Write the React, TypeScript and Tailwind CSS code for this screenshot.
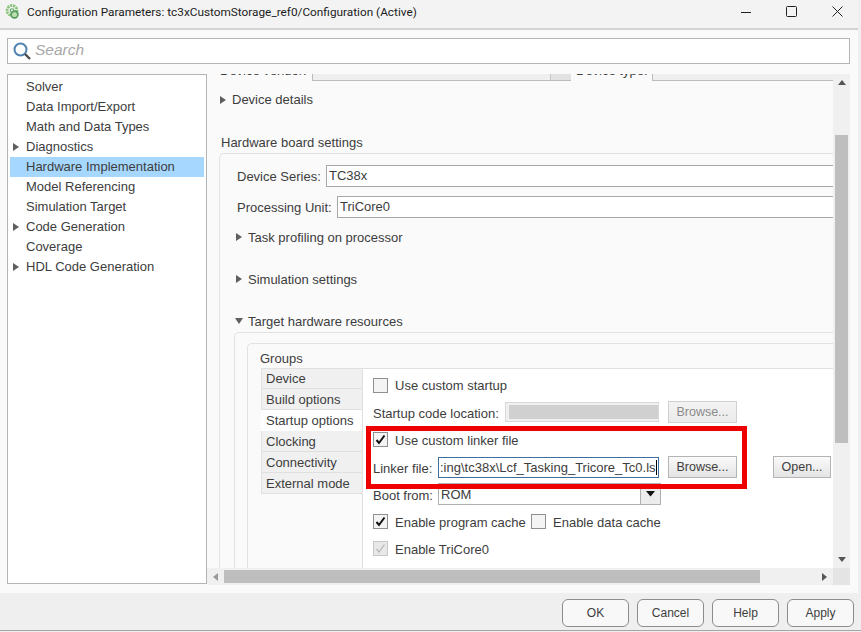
import React from "react";

const T = ({ open, className = "" }: { open?: boolean; className?: string }) => (
  <svg width="8" height="10" viewBox="0 0 8 10" className={"shrink-0 " + className}>
    {open ? <path d="M0 2h8L4 8z" fill="#5f5f5f" /> : <path d="M1 1l6 4-6 4z" fill="#5f5f5f" />}
  </svg>
);

const Check = ({ checked, disabled, className = "" }: { checked?: boolean; disabled?: boolean; className?: string }) => (
  <span className={"w-[15px] h-[15px] border flex items-center justify-center shrink-0 " + (disabled ? "border-[#c8c8c8] bg-[#e8e8e8] " : "border-[#8f8f8f] bg-[#f4f4f4] ") + className}>
    {checked && (
      <svg width="11" height="11" viewBox="0 0 11 11">
        <path d="M1.5 6l2.5 3L9.5 1.5" fill="none" stroke={disabled ? "#b5b5b5" : "#111"} strokeWidth={disabled ? 1.2 : 2} />
      </svg>
    )}
  </span>
);

const Btn = ({ children, disabled, className = "" }: { children: React.ReactNode; disabled?: boolean; className?: string }) => (
  <span className={"h-[22px] w-[69px] border flex items-center justify-center shrink-0 text-[12.5px] bg-gradient-to-b " + (disabled ? "border-[#d0d0d0] from-[#f3f3f3] to-[#ebebeb] text-[#8a8a8a] " : "border-[#b4b4b4] from-[#fafafa] to-[#e4e4e4] ") + className}>
    {children}
  </span>
);

const tree: [string, boolean, boolean][] = [
  ["Solver", false, false],
  ["Data Import/Export", false, false],
  ["Math and Data Types", false, false],
  ["Diagnostics", true, false],
  ["Hardware Implementation", false, true],
  ["Model Referencing", false, false],
  ["Simulation Target", false, false],
  ["Code Generation", true, false],
  ["Coverage", false, false],
  ["HDL Code Generation", true, false],
];

const tabs = ["Device", "Build options", "Startup options", "Clocking", "Connectivity", "External mode"];
const tabPad = ["", "pt-[2px]", "", "pt-[2px]", "pt-[2px]", "pt-[2px]"];

export default function App() {
  return (
    <div className="relative w-[861px] h-[632px] overflow-hidden bg-[#efefef] text-[13px] leading-[20px] text-[#3d3d3d] font-['Liberation_Sans',sans-serif]">
      {/* title bar */}
      <div className="h-[30px] bg-[#f3f3f3] border-b-2 border-[#d3d3d3] flex items-center mr-[3px] pb-[5px]">
        <svg width="15" height="16" viewBox="0 0 15 16" className="ml-[5px] shrink-0">
          <circle cx="7" cy="6.5" r="5" fill="none" stroke="#8cc27a" strokeWidth="2.8" strokeDasharray="2.2 .8" />
          <circle cx="9.5" cy="10.5" r="3.4" fill="#bcdcae" stroke="#4f9a58" strokeWidth="1.6" />
          <circle cx="7" cy="6.5" r="1.8" fill="none" stroke="#5da565" strokeWidth="1.1" />
        </svg>
        <span className="ml-[7px] text-[11.8px] text-[#1c1c1c] font-['Roboto',sans-serif] whitespace-nowrap">Configuration Parameters: tc3xCustomStorage_ref0/Configuration (Active)</span>
        <svg width="10" height="12" viewBox="0 0 10 12" className="ml-auto mr-[35px]"><path d="M0 6.5h10" stroke="#222" strokeWidth="1" /></svg>
        <svg width="12" height="12" viewBox="0 0 12 12" className="mr-[34px]"><rect x=".5" y=".5" width="10" height="10" rx="1" fill="none" stroke="#222" /></svg>
        <svg width="11" height="11" viewBox="0 0 11 11" className="mr-[15px]"><path d="M.5.5l10 10M10.5.5l-10 10" stroke="#222" /></svg>
      </div>

      {/* main */}
      <div className="h-[563px] bg-[#fafafa] mr-[3px] pl-[7px] pr-[8px] pt-[8px] flex flex-col">
        <div className="h-[26px] bg-white border border-[#b4b4b4] flex items-center pl-[4px] pb-[1px]">
          <svg width="20" height="20" viewBox="0 0 20 20" className="shrink-0">
            <circle cx="8.5" cy="8.5" r="6" fill="none" stroke="#4f81b0" strokeWidth="2" />
            <path d="M13 13l5 5" stroke="#4a4a4a" strokeWidth="2.4" />
          </svg>
          <span className="ml-[3px] pb-[2px] text-[15.5px] italic text-[#a8a8a8]">Search</span>
        </div>
        <div className="mt-[10px] flex h-[511px]">
          {/* tree */}
          <div className="w-[200px] h-[510px] bg-white border border-[#b4b4b4] pt-[2px] pl-[2px] pr-[2px] shrink-0">
            {tree.map(([t, arrow, sel]) => (
              <div key={t} className={"h-[20px] flex items-center " + (sel ? "bg-[#a6d8ff]" : "")}>
                <span className="w-[16px] shrink-0 flex justify-start pl-[2px]">{arrow && <T />}</span>
                <span className="whitespace-nowrap">{t}</span>
              </div>
            ))}
          </div>
          {/* right panel */}
          <div className="flex-1 min-w-0 flex flex-col">
            <div className="flex h-[494px]">
              <div className="w-[626px] overflow-hidden">
                {/* clipped top row */}
                <div className="h-[7px] overflow-hidden relative flex">
                  <div className="ml-[105px] w-[259px] h-[7px] bg-[#efefef] border-l border-b border-[#bcbcbc] flex shrink-0">
                    <span className="flex-1" />
                    <span className="w-[21px] bg-[#e2e2e2] border-l border-[#c8c8c8]" />
                  </div>
                  <div className="w-[81px] shrink-0" />
                  <div className="w-[181px] h-[7px] bg-[#efefef] border-l border-b border-[#bcbcbc] shrink-0" />
                  <span className="absolute left-[13px] -top-[13px] whitespace-nowrap">Device vendor:</span>
                  <span className="absolute left-[369px] -top-[13px] whitespace-nowrap">Device type:</span>
                  <span className="absolute left-[110px] -top-[14px] whitespace-nowrap text-[#8a8a8a]">Infineon</span>
                  <span className="absolute left-[450px] -top-[14px] whitespace-nowrap text-[#a08a70]">TriCore</span>
                </div>
                <div className="h-[18px] mt-[10px] ml-[12px] flex items-center gap-[5px] whitespace-nowrap">
                  <T /><span>Device details</span>
                </div>
                <div className="mt-[24px] ml-[14px] h-[20px] flex items-center whitespace-nowrap">Hardware board settings</div>
                {/* group 1 */}
                <div className="ml-[12px] h-[416px] border-l border-t border-[#e2e2e2] rounded-tl-[5px] pl-[17px] pt-[10px]">
                  <div className="flex items-center h-[23px] whitespace-nowrap">
                    <span className="w-[89px] shrink-0 pt-[2px]">Device Series:</span>
                    <span className="h-[22px] flex-1 bg-white border border-r-0 border-[#a8a8a8] pl-[2px] flex items-center pt-[1px]">TC38x</span>
                  </div>
                  <div className="flex items-center h-[23px] mt-[8px] whitespace-nowrap">
                    <span className="w-[100px] shrink-0 pt-[2px]">Processing Unit:</span>
                    <span className="h-[22px] flex-1 bg-white border border-r-0 border-[#a8a8a8] pl-[2px] flex items-center pt-[1px]">TriCore0</span>
                  </div>
                  <div className="mt-[9px] h-[20px] -ml-[2px] flex items-center gap-[5px] whitespace-nowrap"><T /><span className="pt-[2px]">Task profiling on processor</span></div>
                  <div className="mt-[22px] h-[20px] -ml-[2px] flex items-center gap-[5px] whitespace-nowrap"><T /><span className="pt-[2px]">Simulation settings</span></div>
                  <div className="mt-[22px] h-[20px] -ml-[2px] flex items-center gap-[5px] whitespace-nowrap"><T open /><span className="pt-[2px]">Target hardware resources</span></div>
                  {/* group 2 */}
                  <div className="mt-[1px] -ml-[3px] h-[240px] border-l border-t border-[#e2e2e2] rounded-tl-[5px] pl-[12px] pt-[10px]">
                    {/* group 3 */}
                    <div className="h-[230px] border-l border-t border-[#e2e2e2] rounded-tl-[5px] pl-[13px] pt-[4px]">
                      <div className="h-[20px] flex items-center -ml-[1px]"><span className="pt-[2px]">Groups</span></div>
                      <div className="flex">
                        <div className="w-[101px] shrink-0">
                          {tabs.map((t, i) => (
                            <div key={t} className={"h-[21px] flex items-center pl-[4px] border-l whitespace-nowrap border-[#e0e0e0] " + tabPad[i] + " " + (i === 2 ? "bg-white border-l-white" : "bg-[#f0f0f0] border-b") + (i === 0 ? " border-t" : "")}>{t}</div>
                          ))}
                        </div>
                        <div className="flex-1 min-w-0 h-[200px] bg-white border-l border-t border-[#e0e0e0] pl-[10px] pt-[9px] whitespace-nowrap">
                          <div className="h-[15px] flex items-center gap-[7px]"><Check /><span>Use custom startup</span></div>
                          <div className="h-[22px] mt-[8px] flex items-center">
                            <span className="w-[132px] shrink-0 pt-[4px]">Startup code location:</span>
                            <span className="h-[20px] w-[154px] border border-[#d8d8d8] bg-[#f0f0f0] py-[2px] pl-[3px] shrink-0"><span className="block h-full bg-[#d0d0d0]" /></span>
                            <Btn disabled className="ml-[9px]">Browse...</Btn>
                          </div>
                          <div className="h-[15px] mt-[9px] flex items-center gap-[7px]"><Check checked /><span className="pt-[2px]">Use custom linker file</span></div>
                          <div className="h-[22px] mt-[9px] flex items-center">
                            <span className="w-[65px] shrink-0 pt-[4px]">Linker file:</span>
                            <span className="h-[21px] w-[221px] border border-[#3f6f9f] bg-white shrink-0 flex items-center pl-[1px] overflow-hidden pt-[1px]">:ing\tc38x\Lcf_Tasking_Tricore_Tc0.ls<span className="w-px h-[15px] bg-black" /></span>
                            <Btn className="ml-[9px]">Browse...</Btn>
                            <Btn className="ml-[36px] !w-[58px]">Open...</Btn>
                          </div>
                          <div className="h-[22px] mt-[5px] flex items-center">
                            <span className="w-[65px] shrink-0 pt-[4px]">Boot from:</span>
                            <span className="h-[22px] w-[223px] border border-[#b0b0b0] bg-white shrink-0 flex items-center pl-[2px]">
                              <span className="pt-[2px]">ROM</span>
                              <span className="ml-auto w-[20px] h-full bg-[#ececec] border-l border-[#b0b0b0] flex items-center justify-center">
                                <svg width="9" height="6" viewBox="0 0 9 6"><path d="M0 0h9L4.5 5.5z" fill="#111" /></svg>
                              </span>
                            </span>
                          </div>
                          <div className="h-[15px] mt-[9px] flex items-center gap-[7px]">
                            <Check checked /><span className="w-[129px] shrink-0 pt-[2px]">Enable program cache</span>
                            <Check /><span className="pt-[2px]">Enable data cache</span>
                          </div>
                          <div className="h-[15px] mt-[12px] flex items-center gap-[7px]"><Check checked disabled /><span className="pt-[2px]">Enable TriCore0</span></div>
                        </div>
                      </div>
                    </div>
                  </div>
                </div>
              </div>
              {/* vertical scrollbar */}
              <div className="w-[17px] bg-[#f0f0f0] flex flex-col items-center shrink-0">
                <svg width="8" height="5" viewBox="0 0 8 5" className="mt-[6px]"><path d="M4 0l4 5H0z" fill="#555" /></svg>
                <div className="mt-[50px] w-[13px] h-[308px] bg-[#bebebe]" />
                <svg width="8" height="5" viewBox="0 0 8 5" className="mt-auto mb-[6px]"><path d="M0 0h8L4 5z" fill="#555" /></svg>
              </div>
            </div>
            {/* horizontal scrollbar */}
            <div className="h-[17px] flex shrink-0">
              <div className="w-[626px] bg-[#f0f0f0] flex items-center">
                <svg width="5" height="8" viewBox="0 0 5 8" className="ml-[6px]"><path d="M5 0v8L0 4z" fill="#999" /></svg>
                <div className="ml-[6px] w-[536px] h-[13px] bg-[#bebebe]" />
                <svg width="5" height="8" viewBox="0 0 5 8" className="ml-auto mr-[6px]"><path d="M0 0v8l5-4z" fill="#555" /></svg>
              </div>
              <div className="w-[17px] bg-[#e4e4e4]" />
            </div>
          </div>
        </div>
      </div>

      {/* footer */}
      <div className="h-[38px] border-b border-[#a5a5a5] flex items-start justify-end gap-[8px] pt-[6px] pr-[7px] text-[12px]">
        {["OK", "Cancel", "Help", "Apply"].map((b) => (
          <span key={b} className="w-[67px] h-[28px] bg-[#f8f8f8] border border-[#8c8c8c] rounded-[6px] flex items-center justify-center">{b}</span>
        ))}
      </div>

      {/* red annotation */}
      <div className="absolute left-[366px] top-[426px] w-[381px] h-[63px] border-[5px] border-[#ee0000]" />
    </div>
  );
}
